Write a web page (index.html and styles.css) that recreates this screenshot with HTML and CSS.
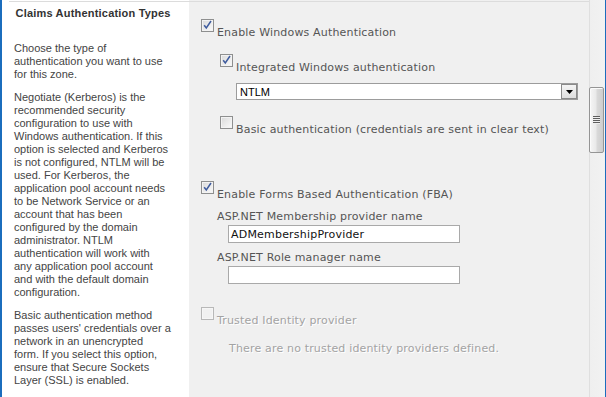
FILE: index.html
```html
<!DOCTYPE html>
<html>
<head>
<meta charset="utf-8">
<title>Claims Authentication Types</title>
<link rel="stylesheet" href="styles.css">
</head>
<body>
<div class="frame">
  <div class="section">
    <div class="desc">
      <div class="desc-inner">
        <h3 class="section-title">Claims Authentication Types</h3>
        <p class="desc-text">Choose the type of<br>authentication you want to use<br>for this zone.</p>
        <p class="desc-text">Negotiate (Kerberos) is the<br>recommended security<br>configuration to use with<br>Windows authentication. If this<br>option is selected and Kerberos<br>is not configured, NTLM will be<br>used. For Kerberos, the<br>application pool account needs<br>to be Network Service or an<br>account that has been<br>configured by the domain<br>administrator. NTLM<br>authentication will work with<br>any application pool account<br>and with the default domain<br>configuration.</p>
        <p class="desc-text">Basic authentication method<br>passes users' credentials over a<br>network in an unencrypted<br>form. If you select this option,<br>ensure that Secure Sockets<br>Layer (SSL) is enabled.</p>
      </div>
    </div>
    <div class="fields">
      <div class="fields-inner">
        <div class="option">
          <span class="cb"><svg class="check" viewBox="0 0 13 13" width="13" height="13"><path d="M3.2 6.2 L5.3 9 L10 2" /></svg></span>
          <span class="opt-label">Enable Windows Authentication</span>
        </div>
        <div class="sub">
          <div class="option">
            <span class="cb"><svg class="check" viewBox="0 0 13 13" width="13" height="13"><path d="M3.2 6.2 L5.3 9 L10 2" /></svg></span>
            <span class="opt-label">Integrated Windows authentication</span>
          </div>
          <div class="select">
            <span class="select-value">NTLM</span>
            <span class="select-btn"><svg viewBox="0 0 7 4" width="7" height="4"><path d="M0 0 H7 L3.5 4 Z" fill="#000"/></svg></span>
          </div>
          <div class="option option-basic">
            <span class="cb"></span>
            <span class="opt-label">Basic authentication (credentials are sent in clear text)</span>
          </div>
        </div>
        <div class="option option-fba">
          <span class="cb"><svg class="check" viewBox="0 0 13 13" width="13" height="13"><path d="M3.2 6.2 L5.3 9 L10 2" /></svg></span>
          <span class="opt-label">Enable Forms Based Authentication (FBA)</span>
        </div>
        <div class="fba-body">
          <div class="field-label">ASP.NET Membership provider name</div>
          <div class="textbox">ADMembershipProvider</div>
          <div class="field-label field-label-2">ASP.NET Role manager name</div>
          <div class="textbox"></div>
        </div>
        <div class="option option-trusted disabled">
          <span class="cb cb-disabled"></span>
          <span class="opt-label">Trusted Identity provider</span>
        </div>
        <div class="note disabled">There are no trusted identity providers defined.</div>
      </div>
    </div>
  </div>
  <div class="scrollbar">
    <div class="thumb"><span class="grip"></span></div>
  </div>
</div>
</body>
</html>
```

FILE: styles.css
```css
html, body {
  margin: 0;
  padding: 0;
}
body {
  width: 606px;
  height: 397px;
  overflow: hidden;
  background: #ffffff;
  font-family: "DejaVu Sans", Verdana, sans-serif;
  font-size: 11px;
}
.frame {
  display: flex;
  width: 606px;
  height: 397px;
  box-sizing: border-box;
  border-left: 2px solid #1b6dbd;
  border-right: 1px solid #1b6dbd;
}
.section {
  flex: 1;
  display: flex;
}

/* description column */
.desc {
  width: 187px;
  flex: none;
  box-sizing: border-box;
  background: #ffffff;
  padding: 1px 0 0 7px;
}
.desc-inner {
  border-top: 1px solid #dcdcdc;
  padding: 5px 0 0 5px;
  font-family: "Liberation Sans", Arial, sans-serif;
}
.section-title {
  margin: 0 0 0 1.5px;
  font-size: 11px;
  line-height: 13px;
  font-weight: bold;
  letter-spacing: 0.2px;
  color: #333333;
}
.desc-text {
  margin: 0 0 10px;
  font-size: 11px;
  line-height: 13px;
  color: #444444;
  white-space: nowrap;
}
.section-title + .desc-text {
  margin-top: 22px;
}

/* fields column */
.fields {
  flex: 1;
  background: #f0f0f0;
  padding-top: 1px;
}
.fields-inner {
  border-top: 1px solid #dcdcdc;
  padding: 17px 0 0 12px;
  color: #555555;
  letter-spacing: 0.17px;
}
.option {
  display: flex;
  align-items: flex-start;
}
.cb {
  width: 13px;
  height: 13px;
  flex: none;
  box-sizing: border-box;
  border: 1px solid #8e8f8f;
  background: linear-gradient(135deg, #d9d9d9 0%, #ececec 55%, #fbfbfb 100%);
  box-shadow: inset 0 0 0 1px #f3f3f3;
  position: relative;
}
.check {
  position: absolute;
  left: -1px;
  top: -1px;
}
.check path {
  fill: none;
  stroke: #3f5c9e;
  stroke-width: 1.5;
}
.cb-disabled {
  border-color: #b8b8b8;
  background: #f1f1f1;
  box-shadow: inset 0 0 0 1px #f6f6f6;
}
.opt-label {
  margin: 7px 0 0 3px;
  line-height: 13px;
  white-space: nowrap;
}
.sub {
  margin-top: 15px;
  padding-left: 19px;
}
.select {
  margin: 9px 0 0 16px;
  width: 342px;
  height: 17px;
  box-sizing: border-box;
  border: 1px solid #9c9c9c;
  background: #ffffff;
  display: flex;
  align-items: center;
  justify-content: space-between;
  letter-spacing: 0;
}
.select-value {
  padding-left: 3px;
  font-family: "Liberation Sans", Arial, sans-serif;
  font-size: 11px;
  color: #000000;
}
.select-btn {
  width: 16px;
  height: 15px;
  box-sizing: border-box;
  border: 1px solid #8a8a8a;
  background: linear-gradient(to bottom, #f4f4f4, #dedede);
  display: flex;
  align-items: center;
  justify-content: center;
}
.option-basic {
  margin-top: 16px;
}
.option-fba {
  margin-top: 45px;
}
.fba-body {
  padding-left: 16px;
}
.field-label {
  margin-top: 9px;
  line-height: 13px;
}
.field-label-2 {
  margin-top: 8px;
}
.textbox {
  margin: 2px 0 0 11px;
  width: 232px;
  height: 18px;
  box-sizing: border-box;
  border: 1px solid #a9a9a9;
  background: #ffffff;
  padding: 0 2px;
  line-height: 17px;
  color: #111111;
  letter-spacing: 0.2px;
}
.option-trusted {
  margin-top: 23px;
}
.disabled {
  color: #a3a3a3;
  text-shadow: 1px 1px 0 #ffffff;
}
.note {
  margin: 15px 0 0 28px;
  line-height: 13px;
}

/* scrollbar */
.scrollbar {
  width: 16px;
  flex: none;
  background: linear-gradient(to right, #dfdfdf 0, #dfdfdf 1px, #efefef 1px, #f2f2f2 100%);
}
.thumb {
  margin-top: 87px;
  width: 15px;
  height: 66px;
  box-sizing: border-box;
  border: 1px solid #959595;
  border-radius: 2px;
  background: linear-gradient(to right, #f6f6f6 0%, #e9e9e9 45%, #d9d9d9 55%, #cdcdcd 100%);
  box-shadow: inset 1px 1px 0 #fbfbfb;
  display: flex;
  justify-content: center;
  padding-top: 28px;
}
.grip {
  width: 7px;
  height: 8px;
  background: repeating-linear-gradient(to bottom, #5e5e5e 0, #5e5e5e 1px, #eeeeee 1px, #eeeeee 2px);
}
```
